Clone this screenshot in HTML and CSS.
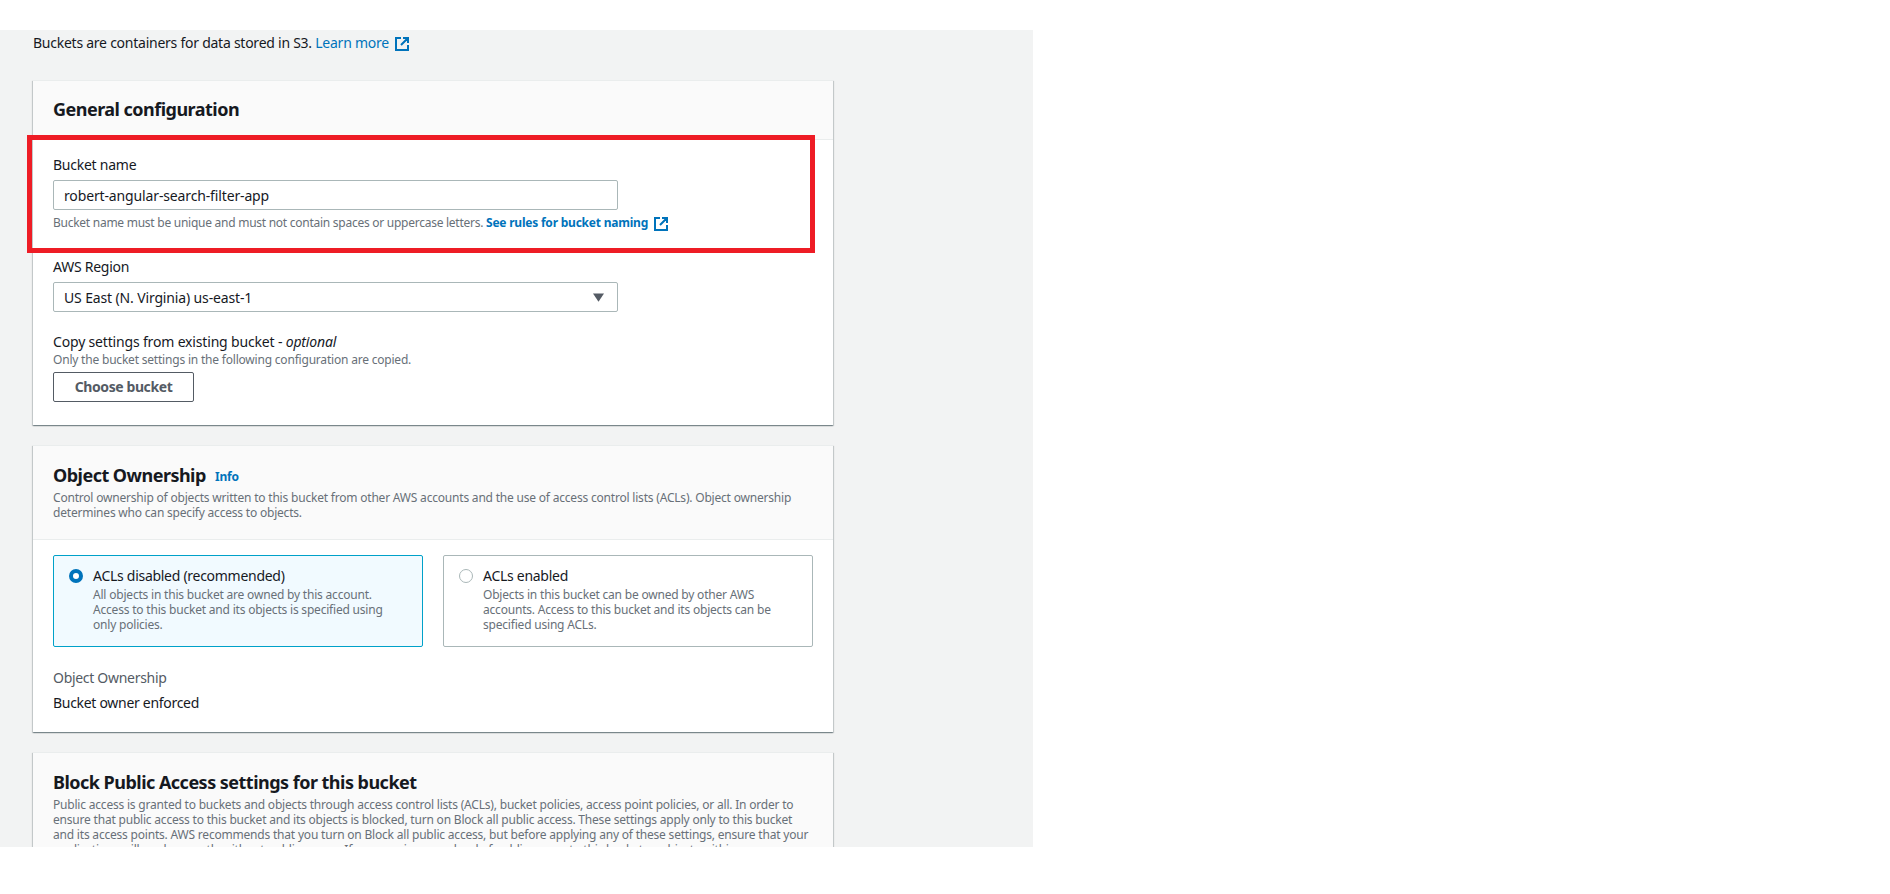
FILE: index.html
```html
<!DOCTYPE html>
<html lang="en">
<head>
<meta charset="utf-8">
<title>Create bucket</title>
<link rel="stylesheet" href="styles.css">
</head>
<body>
<main class="app">
  <p class="intro">Buckets are containers for data stored in S3. <a class="link">Learn more</a>
    <svg class="ext" viewBox="0 0 14 14"><path d="M6 1H1v12h12V8M8 1h5v5M13 1 6 8"/></svg></p>

  <section class="card">
    <header class="head head-plain"><h2>General configuration</h2></header>
    <div class="body">
      <label class="label">Bucket name</label>
      <div class="field">robert-angular-search-filter-app</div>
      <p class="help">Bucket name must be unique and must not contain spaces or uppercase letters. <a class="link strong">See rules for bucket naming</a>
        <svg class="ext ext-help" viewBox="0 0 14 14"><path d="M6 1H1v12h12V8M8 1h5v5M13 1 6 8"/></svg></p>
      <label class="label label-region">AWS Region</label>
      <div class="field select"><span>US East (N. Virginia) us-east-1</span>
        <svg class="caret" viewBox="0 0 12 9"><path d="M0 0h12L6 9z"/></svg></div>
      <label class="label label-copy">Copy settings from existing bucket - <i>optional</i></label>
      <p class="desc">Only the bucket settings in the following configuration are copied.</p>
      <button class="btn">Choose bucket</button>
    </div>
  </section>

  <section class="card">
    <header class="head">
      <h2>Object Ownership <a class="link info">Info</a></h2>
      <p class="desc">Control ownership of objects written to this bucket from other AWS accounts and the use of access control lists (ACLs). Object ownership determines who can specify access to objects.</p>
    </header>
    <div class="body body-own">
      <div class="tiles">
        <div class="tile tile-on">
          <span class="radio radio-on"></span>
          <div><div class="tile-title">ACLs disabled (recommended)</div>
          <p class="desc">All objects in this bucket are owned by this account. Access to this bucket and its objects is specified using only policies.</p></div>
        </div>
        <div class="tile">
          <span class="radio"></span>
          <div><div class="tile-title">ACLs enabled</div>
          <p class="desc">Objects in this bucket can be owned by other AWS accounts. Access to this bucket and its objects can be specified using ACLs.</p></div>
        </div>
      </div>
      <div class="key">Object Ownership</div>
      <div class="value">Bucket owner enforced</div>
    </div>
  </section>

  <section class="card">
    <header class="head">
      <h2>Block Public Access settings for this bucket</h2>
      <p class="desc">Public access is granted to buckets and objects through access control lists (ACLs), bucket policies, access point policies, or all. In order to ensure that public access to this bucket and its objects is blocked, turn on Block all public access. These settings apply only to this bucket and its access points. AWS recommends that you turn on Block all public access, but before applying any of these settings, ensure that your applications will work correctly without public access. If you require some level of public access to this bucket or objects within, you can customize the individual settings below to suit your specific storage use cases.</p>
    </header>
  </section>

  <div class="highlight"></div>
</main>
</body>
</html>
```
FILE: styles.css
```css
* { box-sizing: border-box; }
html, body { margin: 0; background: #fff; }
body { font-family: "Noto Sans", "Open Sans", sans-serif; color: #16191f; font-size: 14px; height: 894px; overflow: hidden; }
.app { position: relative; width: 1033px; height: 817px; margin-top: 30px; padding-left: 33px; background: #f2f3f3; overflow: hidden; }
.intro { margin: 0 0 24px; height: 26px; line-height: 20px; letter-spacing: -0.25px; display: flex; align-items: center; white-space: pre; }
.link { color: #0073bb; }
.strong { font-weight: 700; }
.ext { width: 14px; height: 14px; fill: none; stroke: #0073bb; stroke-width: 2; flex: none; margin: 2px 0 0 6px; }
.card { width: 800px; background: #fff; border-top: 1px solid #eaeded; box-shadow: 0 1px 1px 0 rgba(0,28,36,.3), 1px 1px 1px 0 rgba(0,28,36,.15), -1px 1px 1px 0 rgba(0,28,36,.15); margin-bottom: 20px; }
.head { background: #fafafa; border-bottom: 1px solid #eaeded; padding: 17px 20px 19px; }
.head-plain { height: 59px; padding-top: 16px; }
h2 { margin: 0; font-size: 18px; line-height: 24px; font-weight: 700; letter-spacing: -0.52px; }
.info { font-size: 12px; line-height: 1; margin-left: 5px; letter-spacing: -0.2px; vertical-align: 1px; }
.head .desc { margin-top: 3px; line-height: 15px; }
.body { padding: 15px 20px 23px; }
.label { display: block; line-height: 20px; letter-spacing: -0.25px; }
.field { margin-top: 5px; width: 565px; height: 30px; border: 1px solid #aab7b8; border-radius: 2px; padding: 0 10px; display: flex; align-items: center; background: #fff; letter-spacing: -0.14px; }
.help { margin: 5px 0 0; font-size: 12px; line-height: 16px; color: #687078; letter-spacing: -0.26px; display: flex; align-items: center; white-space: pre; }
.help .strong { letter-spacing: -0.22px; }
.label-region { margin-top: 26px; }
.select { justify-content: space-between; padding-right: 13px; }
.caret { width: 11px; height: 9px; fill: #545b64; }
.label-copy { margin-top: 20px; line-height: 20px; letter-spacing: -0.17px; }
.desc { margin: 0; font-size: 12px; line-height: 16px; color: #687078; letter-spacing: -0.2px; }
.btn { display: block; margin-top: 4px; width: 141px; height: 30px; background: #fff; border: 1px solid #545b64; border-radius: 2px; color: #545b64; font: 700 14px/26px "Noto Sans", sans-serif; letter-spacing: -0.4px; padding: 0; }
.body-own { padding: 15px 20px 19px; }
.tiles { display: grid; grid-template-columns: 370px 370px; column-gap: 20px; }
.tile { height: 92px; border: 1px solid #aab7b8; border-radius: 2px; padding: 10px 15px; display: flex; gap: 10px; }
.tile-on { border-color: #00a1c9; background: #f1faff; }
.radio { flex: none; width: 14px; height: 14px; margin-top: 3px; border-radius: 50%; border: 1px solid #aab7b8; background: #fff; }
.radio-on { border: 4px solid #0073bb; }
.tile-title { line-height: 20px; letter-spacing: -0.28px; }
.tile .desc { line-height: 15px; margin-top: 1px; }
.key { margin-top: 21px; line-height: 20px; color: #545b64; letter-spacing: -0.3px; }
.value { margin-top: 5px; line-height: 20px; letter-spacing: -0.3px; }
.highlight { position: absolute; left: 27px; top: 105px; width: 788px; height: 118px; border: 5px solid #ee1c25; }
```
